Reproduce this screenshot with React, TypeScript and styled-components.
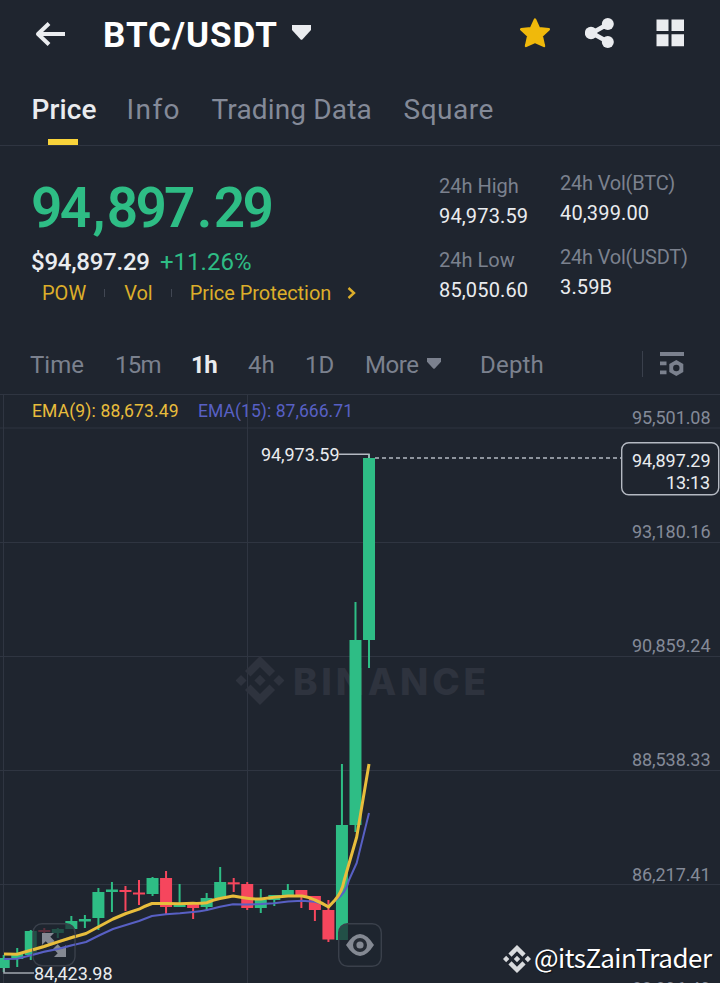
import React from "react";
import styled, { createGlobalStyle } from "styled-components";

const color = {
  bg: "#1f252f",
  text: "#eaecef",
  muted: "#848a98",
  dim: "#7b818e",
  line: "#2f3541",
  green: "#2ebd85",
  red: "#f6465d",
  gold: "#f0b90b",
  ema9: "#e8bd3c",
  ema15: "#5860c4",
};

const GlobalStyle = createGlobalStyle`
  * { box-sizing: border-box; }
  html, body { margin: 0; padding: 0; background: ${color.bg}; overflow: hidden; }
  body { font-family: Roboto, "Liberation Sans", sans-serif; color: ${color.text}; }
`;

const Screen = styled.div`
  width: 720px;
  height: 983px;
  overflow: hidden;
  background: ${color.bg};
  display: flex;
  flex-direction: column;
  white-space: nowrap;
`;

const Header = styled.header`
  height: 70px;
  display: flex;
  align-items: center;
  padding: 0 34px;
  flex: none;
`;

const BackArrow = styled.svg`
  margin-top: -3px;
`;

const Title = styled.h1`
  margin: 0 16px 0 37px;
  font-size: 35px;
  font-weight: 700;
  letter-spacing: 1px;
  color: #fff;
  width: 173px;
`;

const TitleArrow = styled.svg`
  margin-top: -5px;
`;

const HeaderActions = styled.div`
  display: flex;
  align-items: center;
  margin: -4px 0 0 auto;
`;

const ShareSlot = styled.span`
  display: flex;
  margin: 0 41px 0 34px;
`;

const Tabs = styled.nav`
  height: 76px;
  flex: none;
  display: grid;
  grid-template-columns: 95px 85px 192px auto;
  padding-left: 32px;
  border-bottom: 1px solid ${color.line};
`;

const Tab = styled.div<{ $active?: boolean; $spacing?: number }>`
  display: flex;
  flex-direction: column;
  font-size: 28px;
  line-height: 80px;
  height: 75px;
  margin-left: -0.5px;
  font-weight: ${(p) => (p.$active ? 500 : 400)};
  letter-spacing: ${(p) => p.$spacing ?? 0}px;
  color: ${(p) => (p.$active ? color.text : color.muted)};
`;

const TabBar = styled.span`
  width: 30px;
  height: 6px;
  margin: -11px 0 0 16.5px;
  background: #f8d33a;
`;

const Summary = styled.section`
  height: 190px;
  flex: none;
  display: grid;
  grid-template-columns: 408px 121px auto;
  padding-left: 31px;
`;

const PriceColumn = styled.div`
  padding-top: 30px;
`;

const BigPrice = styled.div`
  height: 65px;
  line-height: 65px;
  font-size: 55px;
  font-weight: 600;
  letter-spacing: -2.7px;
  color: ${color.green};
`;

const Mark = styled.span`
  margin: 0 4px;
`;

const SubPrice = styled.div`
  height: 42px;
  line-height: 43px;
  font-size: 24px;
  font-weight: 500;
  letter-spacing: -0.25px;
  display: grid;
  grid-template-columns: 129px auto;
`;

const Change = styled.span`
  color: ${color.green};
  font-weight: 400;
  letter-spacing: 0;
`;

const Tags = styled.div`
  height: 20px;
  padding-left: 11px;
  display: flex;
  align-items: center;
  font-size: 20px;
  color: #dcae2a;
`;

const TagDivider = styled.span<{ $after: number }>`
  width: 1px;
  height: 8px;
  margin: 0 ${(p) => p.$after}px 0 18px;
  background: #414753;
`;

const Protection = styled.span`
  width: 157px;
  letter-spacing: -0.05px;
`;

const Stats = styled.div<{ $top: number; $spacing: number }>`
  padding-top: ${(p) => p.$top}px;
  display: flex;
  flex-direction: column;
  gap: 14px;
  font-size: 20px;
  line-height: 30px;
  letter-spacing: ${(p) => p.$spacing}px;
`;

const StatLabel = styled.div`
  color: ${color.dim};
`;

const StatValue = styled.div`
  letter-spacing: 0.15px;
  color: ${color.text};
`;

const Intervals = styled.div`
  height: 58px;
  flex: none;
  display: grid;
  grid-template-columns: 85px 76px 57px 57px 60px 115px 162px auto;
  align-items: center;
  padding-left: 30px;
  font-size: 24px;
  color: ${color.dim};
`;

const Interval = styled.span<{ $active?: boolean; $spacing?: number }>`
  display: flex;
  align-items: center;
  letter-spacing: ${(p) => p.$spacing ?? 0}px;
  font-weight: ${(p) => (p.$active ? 700 : 400)};
  color: ${(p) => (p.$active ? color.text : "inherit")};
`;

const MoreArrow = styled.svg`
  margin: -4px 0 0 8.5px;
`;

const Settings = styled.span`
  display: flex;
  align-items: center;
  height: 26px;
  padding-left: 17px;
  margin-top: -2px;
  border-left: 1px solid #3a404c;
`;

const Chart = styled.svg`
  display: block;
  flex: none;
  font-family: Roboto, "Liberation Sans", sans-serif;
  font-size: 18px;
`;

const Signature = styled.text`
  font-family: "Noto Sans CJK SC", sans-serif;
  font-size: 26px;
  font-weight: 400;
  fill: #fff;
  text-shadow: 1px 1px 1px rgba(0, 0, 0, 0.6);
`;

const TOP = 394;
const STEP = 13.53;
const centre = (i: number) => 3.7 + i * STEP;

/* wick top, body top, body bottom, wick bottom, rising */
type Candle = [number, number, number, number, boolean];

const candles: Candle[] = [
  [955, 958, 968, 972, true],
  [948, 954, 959, 967, true],
  [930, 931, 955, 960, true],
  [928, 930, 932, 934, false],
  [928, 929, 933, 938, true],
  [916, 921, 929, 929, true],
  [915, 919, 921.5, 928, true],
  [888, 892, 918, 930, true],
  [882, 889.5, 892, 912, true],
  [886, 890, 892, 911, false],
  [880, 892.5, 894.5, 905, false],
  [877, 878, 894, 896, true],
  [871, 878, 907, 914, false],
  [884, 905, 907, 907, true],
  [902, 902, 908, 919, false],
  [893, 898, 907, 911, true],
  [867, 882, 898, 898, true],
  [878, 882.3, 884.3, 892, false],
  [882, 884, 908, 910, false],
  [889, 900, 908, 913, true],
  [895, 895, 900, 906, true],
  [884, 890, 896, 896, true],
  [890, 890, 897, 908, false],
  [896, 896, 910, 921, false],
  [900, 910, 939.5, 942, false],
  [764, 825, 940, 940, true],
  [602, 640, 825, 832, true],
  [454, 458, 640, 668, true],
];

const ema9 =
  "M4 954L17 954.3L30 950.5L44 946.5L58 941.8L71 937.7L86 933.5L100 926L113 919L126 913.5L139 909.2Q145 906 152 903.5L166 903.5L180 903.7L193 903.3Q200 903.6 207 902.7Q214 899.5 220 898.5L233 896L247 898.2Q254 899.3 261 899L274 897.3L288 896L302 896Q309 897 315 900Q322 903 328.5 907L335 900Q342 892 344 881L356.7 837L369 764";
const ema15 =
  "M4 959L17 958.8L30 955.5L44 951.7L58 949L71 945.5L86 942L100 935L113 929L126 925L139 921L152 916L166 914.3L180 913.3L193 912Q200 911.5 207 910L220 906.7L233 904.3L247 904.5L261 904L274 903.2L288 901.5L302 900.7L315 901.7L328.5 906L336 900Q346 893 349 880L356.7 863L369 813";

const priceLevels = ["95,501.08", "93,180.16", "90,859.24", "88,538.33", "86,217.41", "83,896.49"];

function BinanceMark({ x, y, size, fill }: { x: number; y: number; size: number; fill: string }) {
  return (
    <svg x={x} y={y} width={size} height={size} viewBox="0 0 126.61 126.61" fill={fill}>
      <path d="M38.73 53.2 63.3 28.62 87.9 53.21 102.2 38.91 63.3 0 24.43 38.88zM0 63.31 14.3 49 28.6 63.31 14.3 77.61zM38.73 73.41 63.3 98 87.9 73.4 102.21 87.68 63.3 126.61 24.42 87.73zM98 63.31 112.3 49 126.6 63.3 112.3 77.61zM77.83 63.3 63.3 48.77 48.78 63.3 63.3 77.83z" />
    </svg>
  );
}

function PriceChart() {
  return (
    <Chart width="720" height="589" viewBox={`0 ${TOP} 720 589`}>
      <g stroke={color.line} strokeWidth="1">
        {[394.5, 428, 542.5, 656.5, 770.5, 884.5].map((y) => (
          <line key={y} x1="0" x2="720" y1={y} y2={y} />
        ))}
        <line x1="3.5" x2="3.5" y1="394" y2="983" />
        <line x1="247.5" x2="247.5" y1="394" y2="983" />
      </g>

      <BinanceMark x={235.5} y={656} size={49} fill="#2e333e" />
      <text x="293" y="694.5" fontFamily="Inter, sans-serif" fontSize="37" fontWeight="800" fill="#2e333e" textLength="193">
        BINANCE
      </text>

      <g fill="#848a98">
        {priceLevels.map((label, i) => (
          <text key={label} x="632" y={423.8 + i * 114.2} textLength="78.5">
            {label}
          </text>
        ))}
      </g>
      <text x="32" y="417" fontSize="17.5" fill={color.ema9} textLength="146.5">EMA(9): 88,673.49</text>
      <text x="198" y="417" fontSize="17.5" fill={color.ema15} textLength="155">EMA(15): 87,666.71</text>

      {candles.map(([high, top, bottom, low, up], i) => (
        <g key={i} fill={up ? color.green : color.red}>
          <rect x={centre(i) - 1} y={high} width="2" height={low - high} />
          <rect x={centre(i) - 6} y={top} width="12" height={bottom - top} />
        </g>
      ))}

      <path d={ema15} fill="none" stroke={color.ema15} strokeWidth="2" strokeLinejoin="round" />
      <path d={ema9} fill="none" stroke={color.ema9} strokeWidth="3" strokeLinejoin="round" />

      <path d="M339 454.3H369V458" fill="none" stroke="#b4b9c2" strokeWidth="1.5" />
      <text x="261" y="461.3" fill={color.text} textLength="78.5">94,973.59</text>
      <line x1="375" x2="621" y1="458" y2="458" stroke="#b4b9c2" strokeWidth="1.3" strokeDasharray="4 3" />
      <rect x="621.7" y="442.7" width="97" height="52" rx="7" fill={color.bg} stroke="#b4b9c2" strokeWidth="1.4" />
      <text x="632" y="467.3" fill={color.text} textLength="78.5">94,897.29</text>
      <text x="666" y="489.3" fill={color.text} textLength="44">13:13</text>

      <rect x="33" y="923.7" width="42" height="42" rx="9" fill={color.bg} fillOpacity=".72" stroke="#3a404b" strokeWidth="1.4" />
      <path d="M42 933H54L50.3 936.7L54.5 941L50 945.5L45.7 941.2L42 945ZM66 957H54L57.7 953.3L53.2 948.7L57.7 944.3L62.3 948.8L66 945Z" fill="#848993" />
      <path d="M33 949.7L44 946.5L58 941.8L71 937.7L75 936.5" fill="none" stroke={color.ema9} strokeWidth="3" />
      <path d="M33 954.7L44 951.7L58 949L71 945.5L75 944.5" fill="none" stroke={color.ema15} strokeWidth="2" />

      <path d="M4 968V973H34" fill="none" stroke="#a1a6b0" strokeWidth="1.5" />
      <text x="34" y="980" fill={color.text} textLength="78.5">84,423.98</text>

      <rect x="338.7" y="923.7" width="42.6" height="42.6" rx="9" fill={color.bg} fillOpacity=".72" stroke="#3a404b" strokeWidth="1.4" />
      <path d="M346 945Q353 934 360 934T374 945Q367 956 360 956T346 945Z" fill="#848993" />
      <circle cx="360" cy="945" r="5.3" fill="none" stroke="#252b34" strokeWidth="3.4" />

      <BinanceMark x={503} y={945} size={28} fill="#d8dadd" />
      <Signature x="534" y="968" textLength="178">
        @itsZainTrader
      </Signature>
    </Chart>
  );
}

export default function App() {
  return (
    <Screen>
      <GlobalStyle />
      <Header>
        <BackArrow width="32" height="26" viewBox="0 0 32 26" fill="none" stroke={color.text} strokeWidth="4">
          <path d="M31 13H4M15 2.5L4 13L15 23.5" strokeLinejoin="round" />
        </BackArrow>
        <Title>BTC/USDT</Title>
        <TitleArrow width="19" height="15" viewBox="0 0 18 14" fill={color.text}>
          <path d="M0 0H18V4.6L10 13.4Q9 14.4 8 13.4L0 4.6Z" />
        </TitleArrow>
        <HeaderActions>
          <svg width="31" height="32" viewBox="0 0 31 32" fill={color.gold} stroke={color.gold} strokeWidth="2.4" strokeLinejoin="round">
            <path d="M15 2.5L19 11.2L28.8 12.3L21.8 18.9L24 29L15 25L6 29L8.2 18.9L1.2 12.3L11 11.2Z" />
          </svg>
          <ShareSlot>
            <svg width="30" height="32" viewBox="0 0 30 32" fill={color.text}>
              <path d="M23 7L7 16L23 25" fill="none" stroke={color.text} strokeWidth="4.5" />
              <circle cx="22.8" cy="7" r="6" />
              <circle cx="6" cy="16" r="6.2" />
              <circle cx="22.8" cy="25" r="6" />
            </svg>
          </ShareSlot>
          <svg width="30" height="28" viewBox="0 0 30 28" fill={color.text}>
            <path d="M0.5 0.5H12.5V12H0.5ZM15.5 0.5H28V12H15.5ZM0.5 15.2H12.5V27.2H0.5ZM15.5 15.2H28V27.2H15.5Z" />
          </svg>
        </HeaderActions>
      </Header>

      <Tabs>
        <Tab $active $spacing={0.1}>
          Price
          <TabBar />
        </Tab>
        <Tab $spacing={1.4}>Info</Tab>
        <Tab $spacing={0.15}>Trading Data</Tab>
        <Tab $spacing={0.5}>Square</Tab>
      </Tabs>

      <Summary>
        <PriceColumn>
          <BigPrice>
            94<Mark>,</Mark>897<Mark>.</Mark>29
          </BigPrice>
          <SubPrice>
            <span>$94,897.29</span>
            <Change>+11.26%</Change>
          </SubPrice>
          <Tags>
            <span>POW</span>
            <TagDivider $after={19} />
            <span>Vol</span>
            <TagDivider $after={18} />
            <Protection>Price Protection</Protection>
            <svg width="9" height="12" viewBox="0 0 9 12" fill="none" stroke="#dcae2a" strokeWidth="2.4">
              <path d="M1.5 1L7 6L1.5 11" />
            </svg>
          </Tags>
        </PriceColumn>
        <Stats $top={24.5} $spacing={0}>
          <div>
            <StatLabel>24h High</StatLabel>
            <StatValue>94,973.59</StatValue>
          </div>
          <div>
            <StatLabel>24h Low</StatLabel>
            <StatValue>85,050.60</StatValue>
          </div>
        </Stats>
        <Stats $top={21.5} $spacing={-0.2}>
          <div>
            <StatLabel>24h Vol(BTC)</StatLabel>
            <StatValue>40,399.00</StatValue>
          </div>
          <div>
            <StatLabel>24h Vol(USDT)</StatLabel>
            <StatValue>3.59B</StatValue>
          </div>
        </Stats>
      </Summary>

      <Intervals>
        <Interval>Time</Interval>
        <Interval $spacing={-0.8}>15m</Interval>
        <Interval $active $spacing={-0.4}>1h</Interval>
        <Interval>4h</Interval>
        <Interval>1D</Interval>
        <Interval $spacing={-0.4}>
          More
          <MoreArrow width="14" height="11" viewBox="0 0 18 14" fill={color.dim}>
            <path d="M0 0H18V4.6L10 13.4Q9 14.4 8 13.4L0 4.6Z" />
          </MoreArrow>
        </Interval>
        <Interval $spacing={0.2}>Depth</Interval>
        <Settings>
          <svg width="25" height="24" viewBox="0 0 25 24" fill={color.dim}>
            <path d="M0 0H24V4H0ZM0 9.5H6.5V13.2H0ZM0 18.5H6.5V22.2H0Z" />
            <path fillRule="evenodd" d="M16.3 8L23.3 12V20L16.3 24L9.3 20V12ZM16.3 12.8A3.2 3.2 0 1 0 16.3 19.2A3.2 3.2 0 1 0 16.3 12.8Z" />
          </svg>
        </Settings>
      </Intervals>

      <PriceChart />
    </Screen>
  );
}
